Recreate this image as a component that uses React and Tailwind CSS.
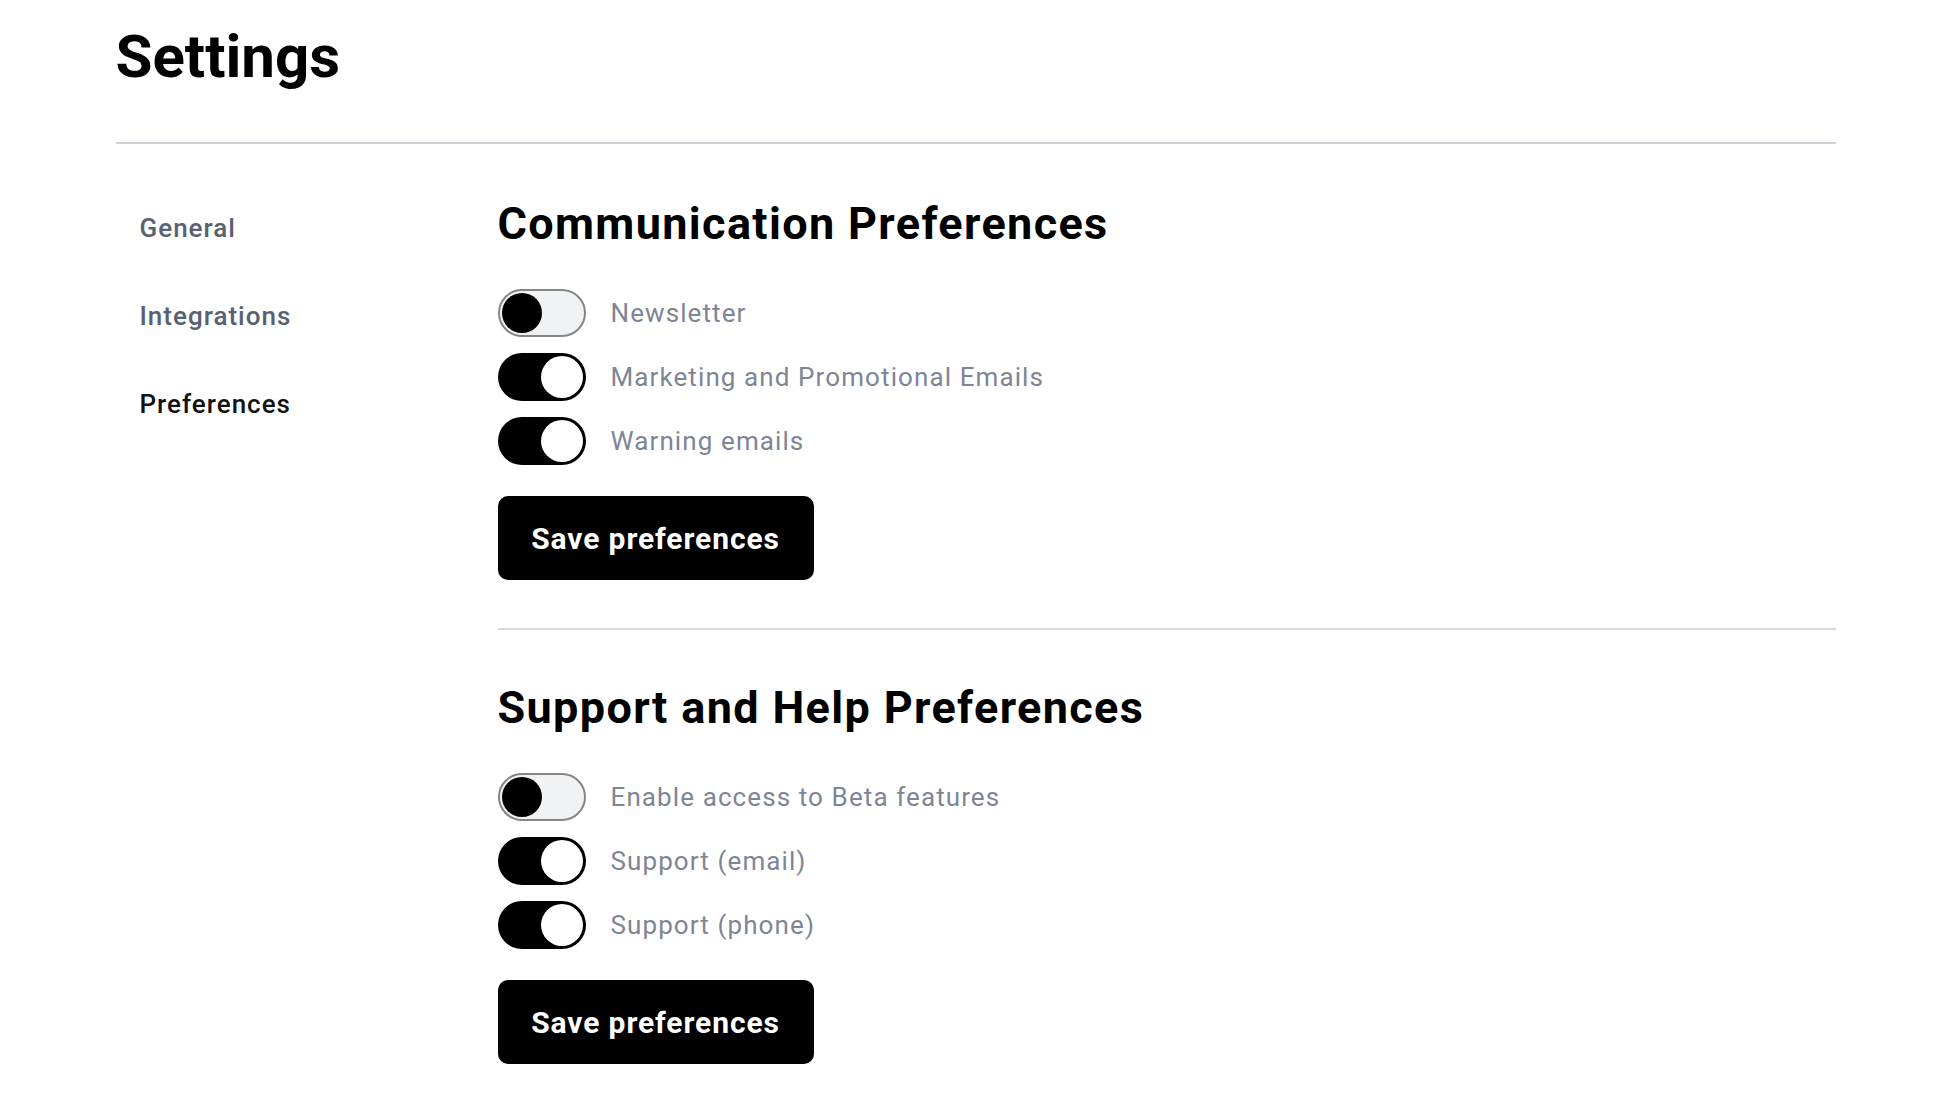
import React, { useState } from "react";

const sidebarItems = [
  { label: "General", active: false },
  { label: "Integrations", active: false },
  { label: "Preferences", active: true },
];

const sections = [
  {
    title: "Communication Preferences",
    options: [
      { label: "Newsletter", on: false },
      { label: "Marketing and Promotional Emails", on: true },
      { label: "Warning emails", on: true },
    ],
  },
  {
    title: "Support and Help Preferences",
    options: [
      { label: "Enable access to Beta features", on: false },
      { label: "Support (email)", on: true },
      { label: "Support (phone)", on: true },
    ],
  },
];

const Toggle = ({ on, onClick }) => {
  if (on) {
    return (
      <button
        onClick={onClick}
        className="flex h-[48px] w-[88px] shrink-0 items-center justify-end rounded-full bg-black p-[3px]"
      >
        <span className="h-[42px] w-[42px] rounded-full bg-white" />
      </button>
    );
  }
  return (
    <button
      onClick={onClick}
      className="flex h-[48px] w-[88px] shrink-0 items-center justify-start rounded-full border-2 border-[#858585] bg-[#f1f2f4] p-[2px]"
    >
      <span className="h-[40px] w-[40px] rounded-full bg-black" />
    </button>
  );
};

const Section = ({ section }) => {
  const [opts, setOpts] = useState(section.options);
  const flip = (i) =>
    setOpts(opts.map((o, j) => (j === i ? { ...o, on: !o.on } : o)));
  return (
    <div>
      <h2 className="text-[45px] font-bold leading-none tracking-[1.35px] text-black">
        {section.title}
      </h2>
      <div className="mt-[43px] flex flex-col gap-[16px]">
        {opts.map((o, i) => (
          <div key={o.label} className="flex items-center gap-[25px]">
            <Toggle on={o.on} onClick={() => flip(i)} />
            <span className="text-[26px] leading-none tracking-[1.1px] text-[#7d8596]">
              {o.label}
            </span>
          </div>
        ))}
      </div>
      <button className="mt-[31px] h-[84px] w-[316px] rounded-[10px] bg-black text-[30px] font-bold tracking-[0.9px] text-white">
        Save preferences
      </button>
    </div>
  );
};

export default function App() {
  return (
    <div
      className="min-h-screen bg-white"
      style={{ fontFamily: "Roboto, 'Noto Sans', sans-serif" }}
    >
      <div className="mx-auto w-[1720px] pt-[27px]">
        <h1 className="text-[60px] font-bold leading-none text-black">
          Settings
        </h1>
        <div className="mt-[55px] border-t-2 border-[#cdd1d8]" />
        <div className="flex">
          <nav className="flex w-[382px] shrink-0 flex-col gap-[62px] pl-[24px] pt-[71px]">
            {sidebarItems.map((item) => (
              <a
                key={item.label}
                href="#"
                className={
                  "text-[26px] font-medium leading-none tracking-[1px] " +
                  (item.active ? "text-[#111111]" : "text-[#566173]")
                }
              >
                {item.label}
              </a>
            ))}
          </nav>
          <main className="flex-1 pt-[57px]">
            <Section section={sections[0]} />
            <div className="mt-[48px] mb-[55px] border-t-2 border-[#d7dae0]" />
            <Section section={sections[1]} />
          </main>
        </div>
      </div>
    </div>
  );
}
